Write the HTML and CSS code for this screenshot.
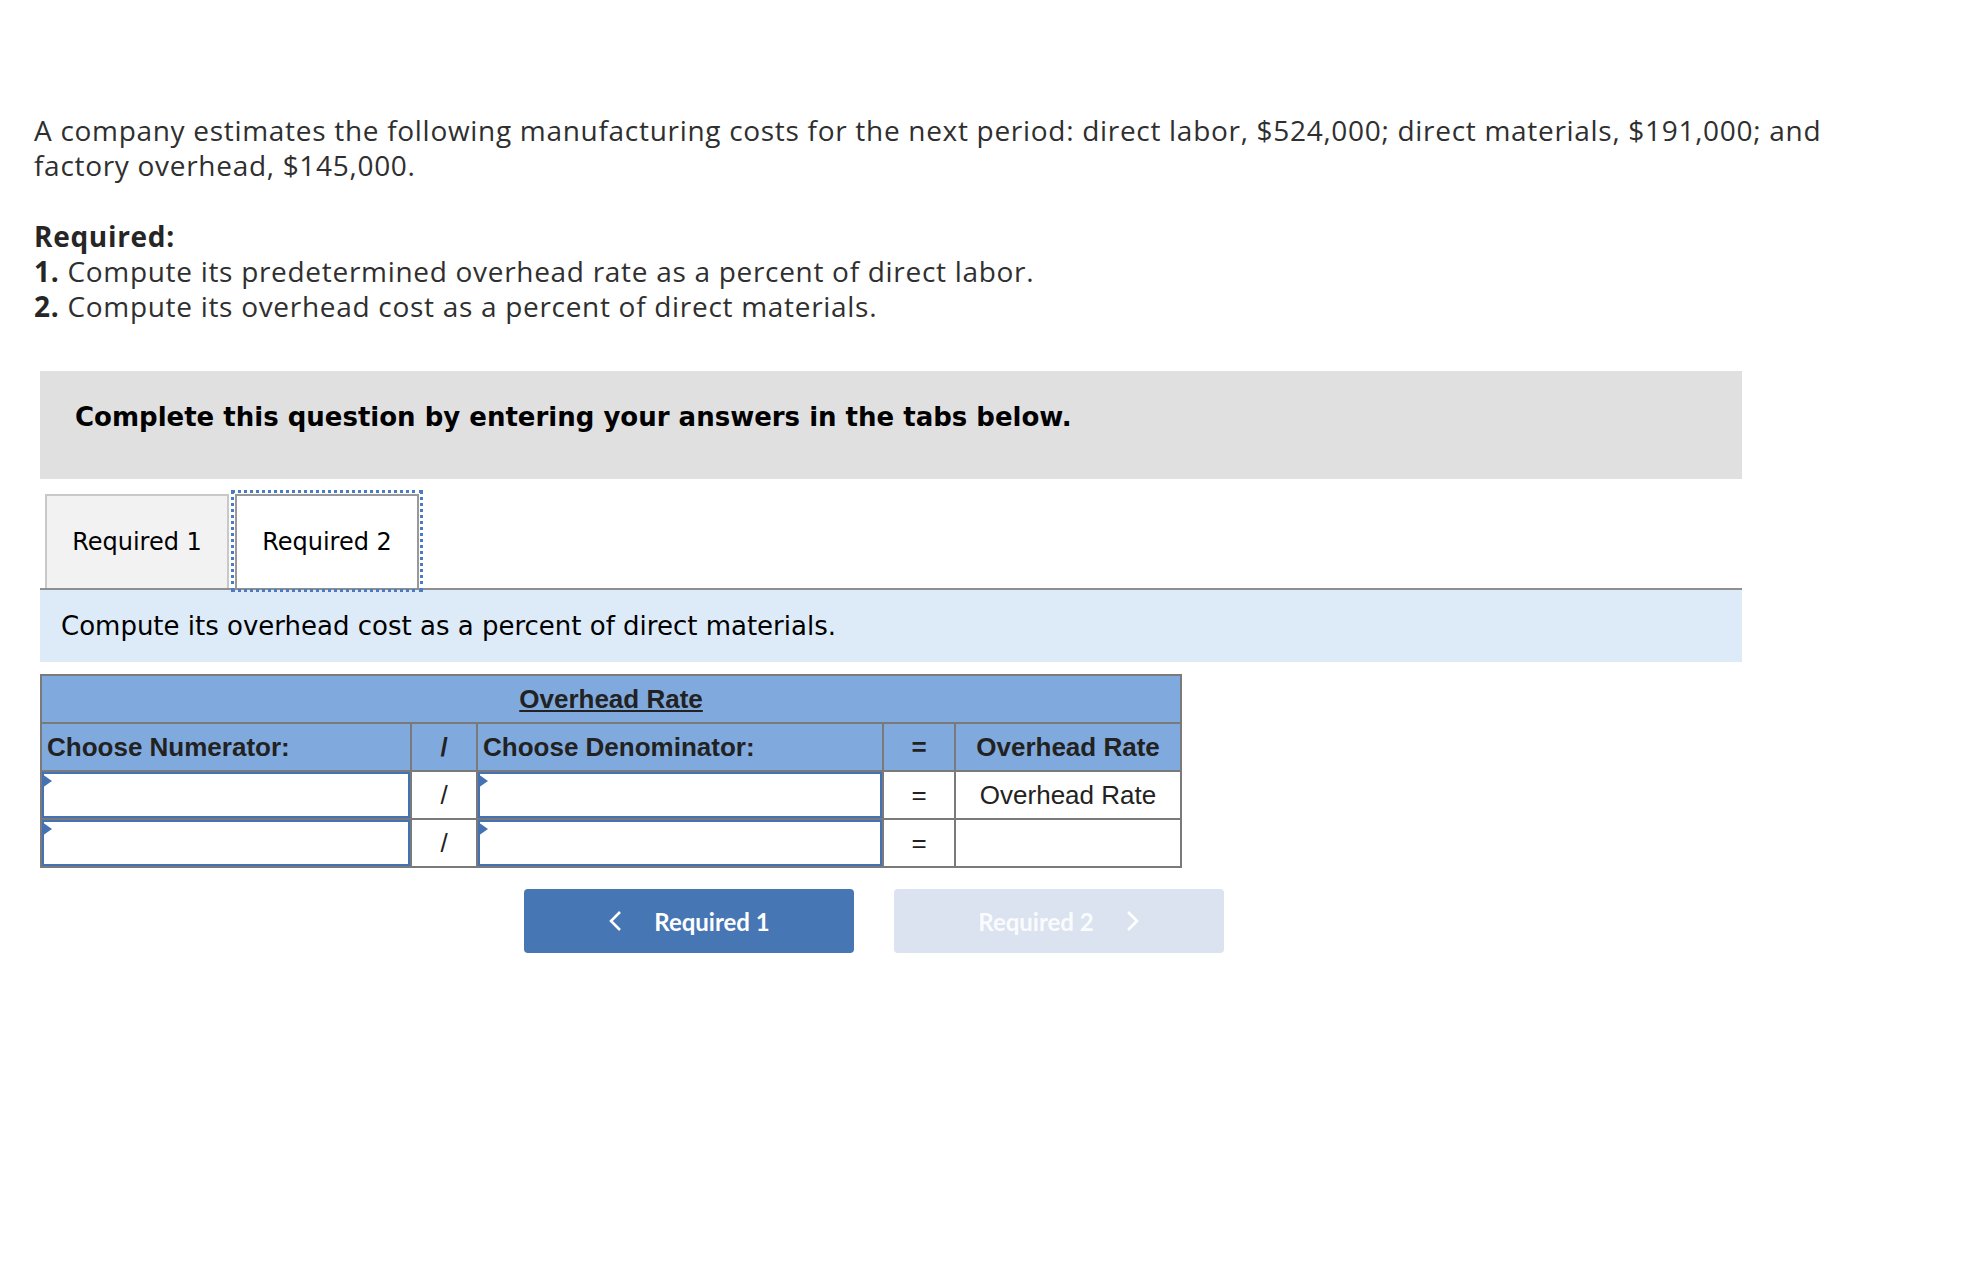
FILE: index.html
```html
<!DOCTYPE html>
<html lang="en">
<head>
    <meta charset="UTF-8">
    <title>Overhead Rate</title>
    <link rel="stylesheet" href="styles.css">
</head>
<body>
    <div class="question">
        <p class="intro">A company estimates the following manufacturing costs for the next period: direct labor, $524,000; direct materials, $191,000; and factory overhead, $145,000.</p>
        <p class="required">
            <strong>Required:</strong><br>
            <strong>1.</strong> Compute its predetermined overhead rate as a percent of direct labor.<br>
            <strong>2.</strong> Compute its overhead cost as a percent of direct materials.
        </p>
    </div>

    <div class="workspace">
        <div class="banner">Complete this question by entering your answers in the tabs below.</div>

        <div class="tabs">
            <div class="tab">Required 1</div>
            <div class="tab active">Required 2</div>
        </div>

        <div class="tab-prompt">Compute its overhead cost as a percent of direct materials.</div>

        <table class="rate-table">
            <colgroup>
                <col class="col-num">
                <col class="col-op">
                <col class="col-den">
                <col class="col-eq">
                <col class="col-res">
            </colgroup>
            <tr class="head">
                <th colspan="5" class="title"><u>Overhead Rate</u></th>
            </tr>
            <tr class="head">
                <th class="left">Choose Numerator:</th>
                <th>/</th>
                <th class="left">Choose Denominator:</th>
                <th>=</th>
                <th>Overhead Rate</th>
            </tr>
            <tr>
                <td class="pick"><div class="select"></div></td>
                <td>/</td>
                <td class="pick"><div class="select"></div></td>
                <td>=</td>
                <td>Overhead Rate</td>
            </tr>
            <tr>
                <td class="pick"><div class="select"></div></td>
                <td>/</td>
                <td class="pick"><div class="select"></div></td>
                <td>=</td>
                <td></td>
            </tr>
        </table>

        <div class="nav">
            <button class="nav-btn prev">
                <svg width="14" height="22" viewBox="0 0 14 22"><path d="M12 2 L3 11 L12 20" fill="none" stroke="#fff" stroke-width="2.6"/></svg>
                <span>Required 1</span>
            </button>
            <button class="nav-btn next">
                <span>Required 2</span>
                <svg width="14" height="22" viewBox="0 0 14 22"><path d="M2 2 L11 11 L2 20" fill="none" stroke="#fff" stroke-width="2.6"/></svg>
            </button>
        </div>
    </div>
</body>
</html>
```

FILE: styles.css
```css
* {
    box-sizing: border-box;
}

body {
    margin: 0;
    padding: 113px 0 0 0;
    background-color: #fff;
    font-family: 'Open Sans', 'Lato', sans-serif;
}

.question {
    padding-left: 34px;
    padding-right: 150px;
    font-size: 28px;
    line-height: 35px;
    letter-spacing: 0.7px;
    color: #2f2f2f;
}

.question p {
    margin: 0;
}

.intro {
    margin-bottom: 36px !important;
}

.question strong {
    color: #262626;
}

.workspace {
    margin-left: 40px;
    width: 1702px;
    margin-top: 47px;
}

.banner {
    height: 108px;
    background-color: #e0e0e0;
    padding: 31px 35px 0;
    font-family: 'DejaVu Sans', Verdana, sans-serif;
    font-weight: bold;
    font-size: 26px;
    line-height: 30px;
    color: #000;
}

.tabs {
    display: flex;
    align-items: flex-end;
    margin-top: 15px;
    padding-left: 5px;
    border-bottom: 2px solid #8f8f8f;
}

.tab {
    width: 184px;
    height: 94px;
    display: flex;
    align-items: center;
    justify-content: center;
    background-color: #f2f2f2;
    border: 2px solid #c8c8c8;
    border-bottom: none;
    font-family: 'DejaVu Sans', Verdana, sans-serif;
    font-size: 24px;
    color: #000;
}

.tab.active {
    margin-left: 6px;
    background-color: #fff;
    border-color: #999;
    outline: 3px dotted #4a7bc4;
    outline-offset: 1px;
}

.tab-prompt {
    height: 72px;
    background-color: #ddebf8;
    padding-left: 21px;
    display: flex;
    align-items: center;
    font-family: 'DejaVu Sans', Verdana, sans-serif;
    font-size: 26px;
    color: #000;
}

.rate-table {
    margin-top: 12px;
    border-collapse: collapse;
    table-layout: fixed;
    width: 1140px;
    font-family: 'Liberation Sans', Arial, sans-serif;
    font-size: 26px;
    color: #222;
}

.col-num { width: 370px; }
.col-op { width: 66px; }
.col-den { width: 406px; }
.col-eq { width: 72px; }
.col-res { width: 226px; }

.rate-table th,
.rate-table td {
    border: 2px solid #7a7a7a;
    height: 48px;
    padding: 0;
    text-align: center;
    vertical-align: middle;
}

.rate-table th {
    background-color: #80aade;
    font-weight: bold;
}

.rate-table th.left {
    text-align: left;
    padding-left: 5px;
}

.select {
    position: relative;
    height: 46px;
    border: 2px solid #4472b4;
    background-color: #fff;
}

.select::before {
    content: '';
    position: absolute;
    top: 0;
    left: -2px;
    border-left: 10px solid #4472b4;
    border-top: 7px solid transparent;
    border-bottom: 7px solid transparent;
}

.nav {
    display: flex;
    gap: 40px;
    margin-top: 21px;
    margin-left: 484px;
}

.nav-btn {
    width: 330px;
    height: 64px;
    border: none;
    border-radius: 4px;
    display: flex;
    align-items: center;
    justify-content: center;
    gap: 32px;
    font-family: 'Lato', 'Open Sans', sans-serif;
    font-weight: bold;
    font-size: 24px;
    color: #fff;
}

.nav-btn.prev {
    background-color: #4676b4;
}

.nav-btn.next {
    background-color: #dae3ef;
    color: rgba(255, 255, 255, 0.9);
}
```
